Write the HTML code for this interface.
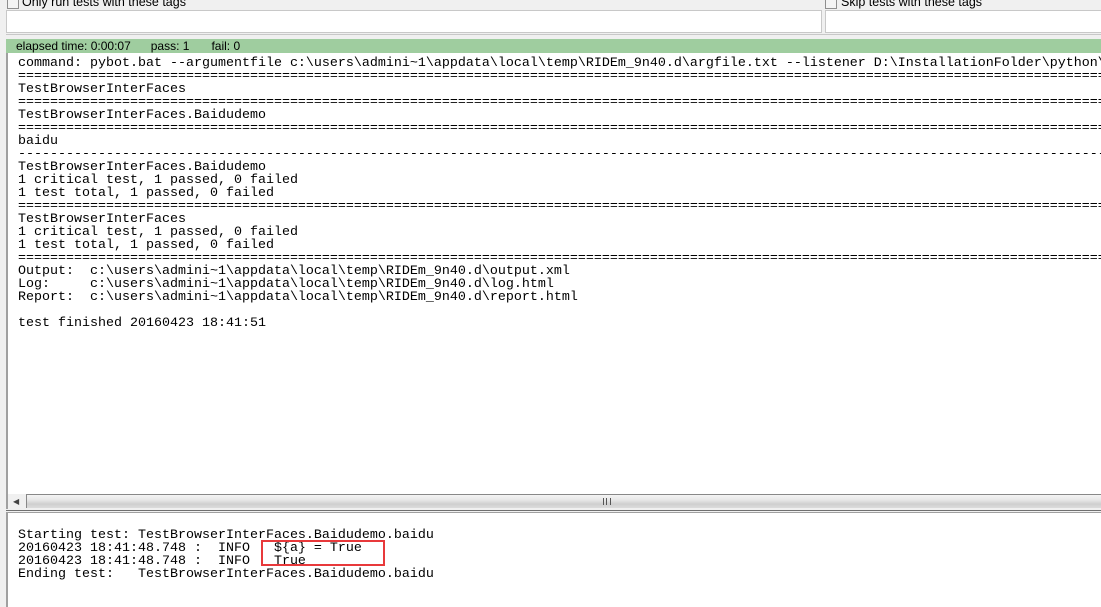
<!DOCTYPE html>
<html><head><style>
body{margin:0;width:1101px;height:607px;background:#f0f0f0;position:relative;overflow:hidden;font-family:"Liberation Sans",sans-serif;}
.abs{position:absolute;}
.lbl{font-size:12.5px;color:#000;top:-5px;}
.cb{width:10px;height:10px;border:1px solid #8f8f8f;background:#f4f4f4;top:-3px;}
.box{background:#fff;border:1px solid #c8c8c8;top:10px;height:21px;}
pre{margin:0;font-family:"Liberation Mono",monospace;font-size:13.33px;line-height:13px;color:#000;white-space:pre;}
</style></head><body>
<div class="abs cb" style="left:7px"></div>
<div class="abs lbl" style="left:22px">Only run tests with these tags</div>
<div class="abs cb" style="left:825px"></div>
<div class="abs lbl" style="left:841px">Skip tests with these tags</div>
<div class="abs box" style="left:6px;width:814px"></div>
<div class="abs box" style="left:825px;width:280px"></div>
<div class="abs" style="left:6px;top:34px;width:1095px;height:1px;background:#c8c8c8"></div>
<div class="abs" style="left:6px;top:39px;width:1095px;height:14px;background:#9fcd9f;font-size:12px;line-height:14px"><span style="margin-left:10px">elapsed time: 0:00:07</span><span style="margin-left:20px">pass: 1</span><span style="margin-left:22px">fail: 0</span></div>
<div class="abs" style="left:6px;top:53px;width:1095px;height:441px;background:#fff;border-left:2px solid #a0a0a0;box-sizing:border-box"></div>
<pre class="abs" style="left:18px;top:57px">command: pybot.bat --argumentfile c:\users\admini~1\appdata\local\temp\RIDEm_9n40.d\argfile.txt --listener D:\InstallationFolder\python\
==============================================================================================================================================
TestBrowserInterFaces
==============================================================================================================================================
TestBrowserInterFaces.Baidudemo
==============================================================================================================================================
baidu
----------------------------------------------------------------------------------------------------------------------------------------------
TestBrowserInterFaces.Baidudemo
1 critical test, 1 passed, 0 failed
1 test total, 1 passed, 0 failed
==============================================================================================================================================
TestBrowserInterFaces
1 critical test, 1 passed, 0 failed
1 test total, 1 passed, 0 failed
==============================================================================================================================================
Output:  c:\users\admini~1\appdata\local\temp\RIDEm_9n40.d\output.xml
Log:     c:\users\admini~1\appdata\local\temp\RIDEm_9n40.d\log.html
Report:  c:\users\admini~1\appdata\local\temp\RIDEm_9n40.d\report.html

test finished 20160423 18:41:51</pre>
<div class="abs" style="left:6px;top:494px;width:1095px;height:15px;background:#f0f0f0;border-left:2px solid #a0a0a0;box-sizing:border-box"></div>
<div class="abs" style="left:13px;top:497px;font-size:8px;color:#444">&#9664;</div>
<div class="abs" style="left:26px;top:494px;width:1075px;height:14px;background:linear-gradient(#f4f4f4,#e6e6e6 40%,#cfcfcf 70%,#dcdcdc);border-top:1px solid #888;border-left:1px solid #888;box-sizing:border-box"></div>
<div class="abs" style="left:603px;top:498px;width:8px;height:7px;border-left:1px solid #555;border-right:1px solid #555;box-sizing:border-box"><div style="margin-left:2px;width:1px;height:7px;background:#555"></div></div>
<div class="abs" style="left:6px;top:510px;width:1095px;height:1px;background:#707070"></div>
<div class="abs" style="left:6px;top:512px;width:1095px;height:95px;background:#fff;border-left:2px solid #a0a0a0;border-top:1px solid #a0a0a0;box-sizing:border-box"></div>
<pre class="abs" style="left:18px;top:529px">Starting test: TestBrowserInterFaces.Baidudemo.baidu
20160423 18:41:48.748 :  INFO   ${a} = True
20160423 18:41:48.748 :  INFO   True
Ending test:   TestBrowserInterFaces.Baidudemo.baidu</pre>
<div class="abs" style="left:261px;top:540px;width:124px;height:26px;border:2px solid #e8393b;box-sizing:border-box"></div>
</body></html>
